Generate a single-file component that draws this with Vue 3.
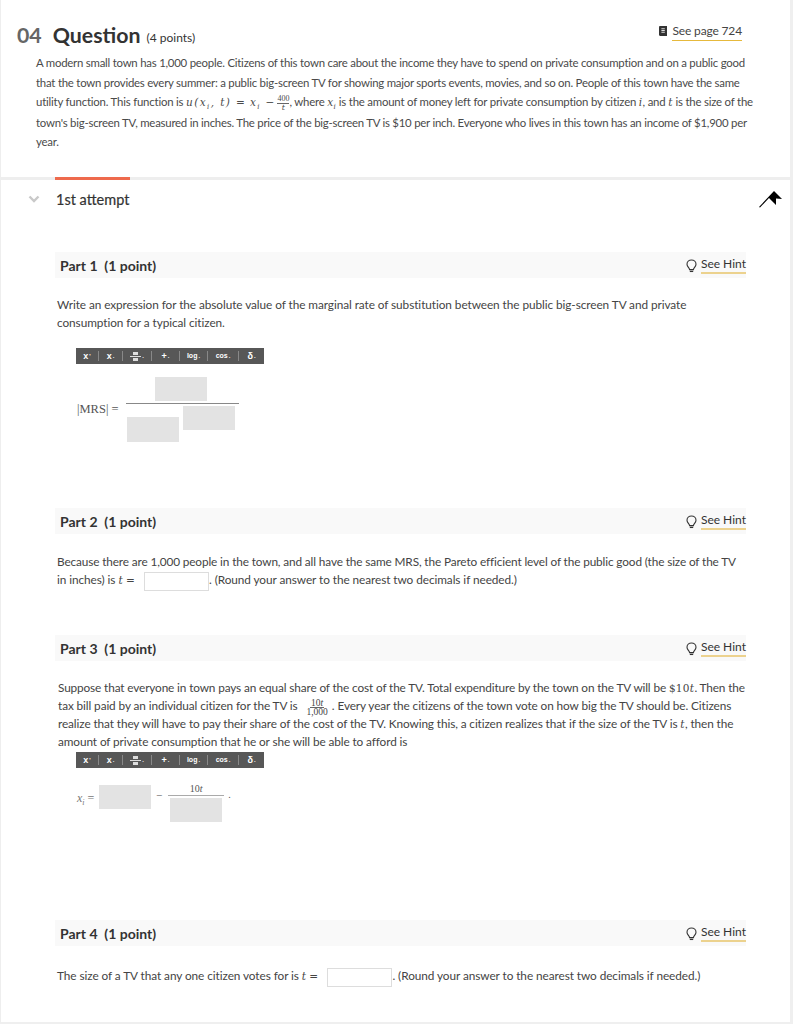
<script setup>
const tools = [
  { key: 'sup', label: 'x' }, { key: 'sub', label: 'x' }, { key: 'frac', label: '' }, { key: 'plus', label: '+' },
  { key: 'log', label: 'log', small: true }, { key: 'cos', label: 'cos', small: true }, { key: 'delta', label: 'δ' }
]
</script>

<template>
  <div class="page">
    <header class="qhead">
      <h1 class="qtitle"><span class="num">04</span><span class="word">Question</span><span class="pts">(4 points)</span></h1>
      <div class="ref">
        <svg class="book" width="8" height="10" viewBox="0 0 8 10"><path d="M0 1.200C0 .5.5 0 1.200 0H8v10H1.200C.5 10 0 9.500 0 8.800z" fill="#333"/><path d="M2.400 2.200h3.400v1H2.400zM2.400 4h3.400v1H2.400zM2.400 5.800h3.400v.9H2.400z" fill="#ddd"/></svg>
        <span class="reflink">See page 724</span>
      </div>
    </header>
    <p class="intro">
      A modern small town has 1,000 people. Citizens of this town care about the income they have to spend on private consumption and on a public good
      that the town provides every summer: a public big-screen TV for showing major sports events, movies, and so on. People of this town have the same
      <span class="line3">utility function. This function is <span class="m eqn">u(x<sub>i</sub>, t) <span class="up">=</span> x<sub>i</sub> <span class="up">−</span></span> <span class="frac tiny"><span>400</span><span class="m">t</span></span>, where <span class="m">x<sub>i</sub></span> is the amount of money left for private consumption by citizen <span class="m">i</span>, and <span class="m">t</span> is the size of the</span>
      town's big-screen TV, measured in inches. The price of the big-screen TV is $10 per inch. Everyone who lives in this town has an income of $1,900 per
      year.
    </p>

    <div class="divider"><span class="accent"></span></div>

    <div class="attempt">
      <svg class="chev" width="12" height="8" viewBox="0 0 12 8"><path d="M1.500 1.500 6 6l4.500-4.500" fill="none" stroke="#c9c9c9" stroke-width="2.400"/></svg>
      <span class="attempt-label">1st attempt</span>
      <svg class="flag" width="25" height="19" viewBox="0 0 25 19"><path d="M1 17 16 1l8 8-6-.5V15l-7-7-9 9.500z" fill="#000"/></svg>
    </div>

    <section class="part part1">
      <div class="part-bar"><span class="part-title">Part 1 &nbsp;(1 point)</span><span class="hint"><svg class="bulb" width="11" height="14" viewBox="0 0 11 14"><path d="M3.600 10.600C3.200 8.600 1 7.800 1 5.200 1 2.800 3 1 5.500 1S10 2.800 10 5.200c0 2.600-2.200 3.400-2.600 5.400z" fill="none" stroke="#333" stroke-width="1.100"/><path d="M3.800 12.400h3.400" stroke="#333" stroke-width="1.300"/></svg><span class="hintlink">See Hint</span></span></div>
      <p class="body b1">Write an expression for the absolute value of the marginal rate of substitution between the public big-screen TV and private consumption for a typical citizen.</p>
      <div class="toolbar tb1">
        <span v-for="t in tools" :key="t.key" class="tool" :class="{ sm: t.small }">
          <svg v-if="t.key === 'frac'" width="11" height="9" viewBox="0 0 11 9"><path d="M3 0h5v3H3zM0 4h11v1H0zM3 6h5v3H3z" fill="#ddd"/></svg>
          <template v-else>{{ t.label }}</template><small>{{ t.key === 'sup' ? "'" : '.' }}</small>
        </span>
      </div>
      <div class="eq eq1">
        <span class="mrs">|MRS| =</span>
        <div class="bigfrac f1">
          <div class="top"><span class="box"></span></div>
          <div class="bottom"><span class="box low"></span><span class="box high"></span></div>
        </div>
      </div>
    </section>

    <section class="part part2">
      <div class="part-bar"><span class="part-title">Part 2 &nbsp;(1 point)</span><span class="hint"><svg class="bulb" width="11" height="14" viewBox="0 0 11 14"><path d="M3.600 10.600C3.200 8.600 1 7.800 1 5.200 1 2.800 3 1 5.500 1S10 2.800 10 5.200c0 2.600-2.200 3.400-2.600 5.400z" fill="none" stroke="#333" stroke-width="1.100"/><path d="M3.800 12.400h3.400" stroke="#333" stroke-width="1.300"/></svg><span class="hintlink">See Hint</span></span></div>
      <p class="body b2">Because there are 1,000 people in the town, and all have the same MRS, the Pareto efficient level of the public good (the size of the TV in inches) is <span class="m">t</span> <span class="up">=</span> <span class="input"></span>. (Round your answer to the nearest two decimals if needed.)</p>
    </section>

    <section class="part part3">
      <div class="part-bar"><span class="part-title">Part 3 &nbsp;(1 point)</span><span class="hint"><svg class="bulb" width="11" height="14" viewBox="0 0 11 14"><path d="M3.600 10.600C3.200 8.600 1 7.800 1 5.200 1 2.800 3 1 5.500 1S10 2.800 10 5.200c0 2.600-2.200 3.400-2.600 5.400z" fill="none" stroke="#333" stroke-width="1.100"/><path d="M3.800 12.400h3.400" stroke="#333" stroke-width="1.300"/></svg><span class="hintlink">See Hint</span></span></div>
      <p class="body b3">Suppose that everyone in town pays an equal share of the cost of the TV. Total expenditure by the town on the TV will be <span class="up">$10</span><span class="m">t</span>. Then the tax bill paid by an individual citizen for the TV is <span class="frac tiny2"><span class="up">10<i>t</i></span><span class="up">1,000</span></span>. Every year the citizens of the town vote on how big the TV should be. Citizens realize that they will have to pay their share of the cost of the TV. Knowing this, a citizen realizes that if the size of the TV is <span class="m">t</span>, then the amount of private consumption that he or she will be able to afford is</p>
      <div class="toolbar tb3">
        <span v-for="t in tools" :key="t.key" class="tool" :class="{ sm: t.small }">
          <svg v-if="t.key === 'frac'" width="11" height="9" viewBox="0 0 11 9"><path d="M3 0h5v3H3zM0 4h11v1H0zM3 6h5v3H3z" fill="#ddd"/></svg>
          <template v-else>{{ t.label }}</template><small>{{ t.key === 'sup' ? "'" : '.' }}</small>
        </span>
      </div>
      <div class="eq eq3">
        <span class="xi"><i>x</i><sub><i>i</i></sub> =</span>
        <span class="box"></span>
        <span class="minus">−</span>
        <div class="bigfrac f3">
          <div class="top"><span class="ten">10<i>t</i></span></div>
          <div class="bottom"><span class="box"></span></div>
        </div>
        <span class="dot">.</span>
      </div>
    </section>

    <section class="part part4">
      <div class="part-bar"><span class="part-title">Part 4 &nbsp;(1 point)</span><span class="hint"><svg class="bulb" width="11" height="14" viewBox="0 0 11 14"><path d="M3.600 10.600C3.200 8.600 1 7.800 1 5.200 1 2.800 3 1 5.500 1S10 2.800 10 5.200c0 2.600-2.200 3.400-2.600 5.400z" fill="none" stroke="#333" stroke-width="1.100"/><path d="M3.800 12.400h3.400" stroke="#333" stroke-width="1.300"/></svg><span class="hintlink">See Hint</span></span></div>
      <p class="body b4">The size of a TV that any one citizen votes for is <span class="m">t</span> <span class="up">=</span> <span class="input"></span>. (Round your answer to the nearest two decimals if needed.)</p>
    </section>
  </div>
</template>

<style>
html, body { margin: 0; background: #fff; }
</style>

<style scoped>
.page {
  box-sizing: border-box; width: 793px; height: 1024px; overflow: hidden;
  border-left: 1px solid #eee; border-right: 3px solid #efefef; border-bottom: 2px solid #efefef;
  font-family: Lato, "Liberation Sans", sans-serif; color: #444; background: #fff;
}
.qhead { display: flex; justify-content: space-between; padding: 21px 48px 0 16px; height: 31px; }
.qtitle { margin: 0; font-size: 21.300px; line-height: 28px; font-weight: 700; color: #333; white-space: nowrap; }
.num { color: #666; margin-right: 11px; }
.pts { font-size: 12px; font-weight: 400; margin-left: 6px; position: relative; top: -1px; }
.ref { display: flex; align-items: flex-start; gap: 5px; font-size: 12px; letter-spacing: -.15px; line-height: 19px; }
.book { margin-top: 5px; }
.reflink { border-bottom: 1px solid #e6b93c; height: 19px; }
.intro { margin: 0 0 0 35px; width: 725px; font-size: 11.400px; letter-spacing: -.23px; line-height: 19.600px; height: 124px; padding-top: 1px; color: #4a4a4a; }
.line3 { letter-spacing: -.2px; }
.m { font-family: "DejaVu Serif", "Liberation Serif", serif; font-style: italic; font-size: 10.500px; letter-spacing: .3px; }
.m sub { font-size: 7px; line-height: 0; }
.eqn { letter-spacing: 1.400px; }
.up { font-family: "DejaVu Serif", "Liberation Serif", serif; font-style: normal; font-size: 10.500px; letter-spacing: .3px; }
.frac { display: inline-flex; flex-direction: column; align-items: center; vertical-align: middle; font-family: "Liberation Serif", serif; line-height: 8px; margin-top: -6px; margin-bottom: -6px; }
.frac > span:first-child { border-bottom: 1px solid #666; }
.tiny { font-size: 8px; letter-spacing: 0; }
.tiny .m { font-size: 8px; }
.tiny2 { font-size: 9.500px; margin: -6px 3px -6px 5px; }
.tiny2 .up { font-size: 9.500px; font-family: "Liberation Serif", serif; letter-spacing: 0; padding: 0 1px; }
.divider { height: 3px; background: #eee; position: relative; }
.accent { position: absolute; left: 54px; top: 0; width: 75px; height: 3px; background: #ee6a4d; }
.attempt { display: flex; align-items: center; height: 38px; padding-left: 27px; position: relative; }
.attempt-label { margin-left: 16px; font-size: 14.500px; font-weight: 400; color: #333; -webkit-text-stroke: .2px #333; }
.flag { position: absolute; left: 757px; top: 10px; }
.part { padding-left: 54px; width: 691px; }
.part-bar { display: flex; justify-content: space-between; align-items: center; height: 26px; background: #f9f9f9; padding-left: 5px; }
.part-title { font-size: 14px; font-weight: 700; color: #333; }
.hint { display: flex; align-items: center; gap: 4px; font-size: 12px; color: #333; }
.bulb { margin-top: 1px; }
.hintlink { border-bottom: 2px solid #ecd28e; line-height: 16px; }
.part1 { margin-top: 34px; height: 256px; }
.part2 { height: 127px; }
.part3 { height: 285px; }
.part4 { height: 60px; }
.body { margin: 0; font-size: 11.800px; letter-spacing: -.065px; line-height: 18px; color: #444; }
.b1 { margin: 18px 0 0 2px; }
.b2 { margin: 19px 0 0 2px; }
.b2::first-line { letter-spacing: -.125px; }
.b3 { margin: 18px 0 0 3px; letter-spacing: -.1px; }
.b3::first-line { letter-spacing: -.13px; }
.b4 { margin: 21px 0 0 2px; }
.part .body { width: 690px; }
.part .b1 { width: 640px; }
.input { display: inline-block; box-sizing: border-box; width: 65px; height: 19px; border: 1px solid #ddd; background: #fff; vertical-align: -4px; margin: -3px 0 -3px 6px; }
.toolbar { display: grid; grid-template-columns: 23px 24px 29px 28px 28px 31px 25px; align-items: center; width: 188px; height: 16px; margin-left: 21px; background: #575757; color: #fff; font-family: "Liberation Sans", sans-serif; font-size: 9px; font-weight: 700; box-sizing: border-box; }
.tb1 { margin-top: 16px; }
.tb3 { margin-top: 1px; }
.tool { display: flex; align-items: center; justify-content: center; gap: 1px; height: 10px; border-right: 1px solid #888; line-height: 10px; white-space: nowrap; }
.tool:last-child { border-right: 0; }
.tool small { font-size: 6px; }
.tool.sm { font-size: 7px; }
.box { display: block; width: 52px; height: 24px; background: #e3e3e3; }
.eq { position: relative; font-family: "Liberation Serif", serif; color: #555; display: flex; align-items: center; }
.eq1 { margin: 12px 0 0 22px; height: 66px; }
.mrs { font-size: 12.500px; width: 49px; }
.bigfrac { display: flex; flex-direction: column; align-items: center; }
.f1 { width: 113px; }
.f1 .top { padding-bottom: 2px; border-bottom: 1px solid #888; width: 100%; display: flex; justify-content: center; padding-right: 3px; box-sizing: border-box; }
.f1 .bottom { display: flex; gap: 4px; align-items: flex-start; width: 100%; padding-left: 1px; box-sizing: border-box; }
.low { margin-top: 13px; height: 25px; }
.high { margin-top: 2px; }
.eq3 { margin: 17px 0 0 22px; height: 46px; align-items: flex-start; }
.xi { font-size: 12px; margin-top: 6px; width: 22px; color: #777; white-space: nowrap; }
.xi sub { font-size: 8px; line-height: 0; }
.minus { margin: 4px 6px 0 5px; font-size: 11px; }
.f3 { width: 56px; }
.f3 .top { border-bottom: 1px solid #aaa; width: 100%; text-align: center; height: 10px; font-size: 10px; line-height: 7px; }
.f3 .bottom { padding-top: 2px; }
.dot { margin: 4px 0 0 4px; font-size: 10px; }
</style>
